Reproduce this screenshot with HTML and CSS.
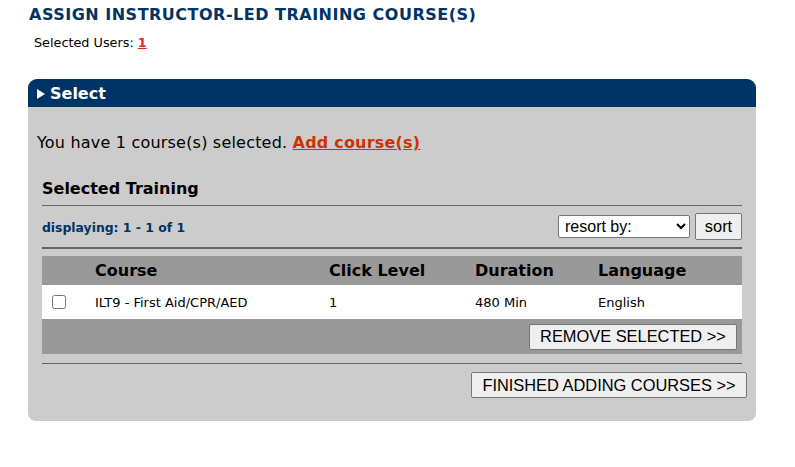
FILE: index.html
```html
<!DOCTYPE html>
<html>
<head>
<meta charset="utf-8">
<link rel="stylesheet" href="styles.css">
</head>
<body>
<h1 class="title">ASSIGN INSTRUCTOR-LED TRAINING COURSE(S)</h1>
<div class="users">Selected Users: <a href="#" class="users-link">1</a></div>
<div class="panel">
  <div class="panel-head"><span class="tri"></span><span class="panel-title">Select</span></div>
  <div class="panel-body">
    <p class="count">You have 1 course(s) selected. <a href="#" class="add-link">Add course(s)</a></p>
    <div class="section">
      <h2 class="section-title">Selected Training</h2>
      <div class="toolbar">
        <span class="displaying">displaying: 1 - 1 of 1</span>
        <div class="sorter">
          <select class="sort-select"><option>resort by:</option></select>
          <button class="btn sort-btn">sort</button>
        </div>
      </div>
      <div class="grid">
        <div class="grid-row grid-head">
          <div></div>
          <div>Course</div>
          <div>Click Level</div>
          <div>Duration</div>
          <div>Language</div>
        </div>
        <div class="grid-row grid-item">
          <div class="cb-cell"><input type="checkbox" class="cb"></div>
          <div>ILT9 - First Aid/CPR/AED</div>
          <div>1</div>
          <div>480 Min</div>
          <div>English</div>
        </div>
        <div class="grid-foot">
          <button class="btn remove-btn">REMOVE SELECTED &gt;&gt;</button>
        </div>
      </div>
    </div>
    <div class="finish-row">
      <button class="btn finish-btn">FINISHED ADDING COURSES &gt;&gt;</button>
    </div>
  </div>
</div>
</body>
</html>
```

FILE: styles.css
```css
html, body {
  margin: 0;
  padding: 0;
  background: #ffffff;
}
body {
  font-family: "DejaVu Sans", Verdana, sans-serif;
  color: #000;
}
.title {
  margin: 0;
  padding: 5px 0 0 29px;
  font-size: 16px;
  line-height: 20px;
  font-weight: bold;
  color: #003366;
  letter-spacing: 0.5px;
}
.users {
  padding: 10px 0 0 34px;
  font-size: 12.8px;
  line-height: 16px;
}
.users-link {
  color: #ee2222;
  font-weight: bold;
}
.panel {
  margin: 28px 0 0 28px;
  width: 728px;
  background: #cccccc;
  border-radius: 9px 9px 8px 8px;
  overflow: hidden;
}
.panel-head {
  height: 28px;
  background: #003366;
  display: flex;
  align-items: center;
  padding-left: 9px;
  color: #fff;
}
.tri {
  width: 0;
  height: 0;
  border-top: 5px solid transparent;
  border-bottom: 5px solid transparent;
  border-left: 8px solid #fff;
  margin-right: 5px;
  margin-top: 1px;
}
.panel-title {
  font-size: 16px;
  font-weight: bold;
}
.panel-body {
  padding: 0 0 23px 0;
}
.count {
  margin: 0;
  padding: 24px 0 0 9px;
  font-size: 16px;
  line-height: 24px;
  letter-spacing: 0.2px;
}
.add-link {
  color: #cc3300;
  font-weight: bold;
}
.section {
  margin: 24px 14px 0 14px;
}
.section-title {
  margin: 0;
  font-size: 16px;
  line-height: 20px;
  font-weight: bold;
  padding-bottom: 6px;
  border-bottom: 1px solid #666666;
}
.toolbar {
  display: flex;
  align-items: center;
  justify-content: space-between;
  height: 41px;
  border-bottom: 2px solid #666666;
}
.displaying {
  font-size: 12.4px;
  font-weight: bold;
  color: #003366;
  padding-top: 2px;
}
.sorter {
  display: flex;
  align-items: center;
  gap: 5px;
}
.sort-select {
  width: 132px;
  height: 23px;
  font-family: "Liberation Sans", Arial, sans-serif;
  font-size: 16px;
  border: 1px solid #767676;
  background: #fff;
  border-radius: 2px;
  padding: 0 2px;
}
.btn {
  font-family: "Liberation Sans", Arial, sans-serif;
  font-size: 16.4px;
  background: #efefef;
  border: 1px solid #767676;
  border-radius: 2px;
  color: #000;
  padding: 0 8px;
}
.sort-btn {
  height: 27px;
  width: 47px;
  padding: 0;
}
.grid {
  margin-top: 7px;
}
.grid-row {
  display: grid;
  grid-template-columns: 53px 234px 146px 123px 1fr;
  align-items: center;
}
.grid-head {
  height: 29px;
  background: #999999;
  font-size: 16px;
  font-weight: bold;
}
.grid-item {
  height: 34px;
  background: #ffffff;
  font-size: 13px;
}
.cb-cell {
  display: flex;
  padding-left: 10px;
}
.cb {
  margin: 0;
  width: 14px;
  height: 14px;
}
.grid-foot {
  height: 35px;
  background: #999999;
  display: flex;
  align-items: center;
  justify-content: flex-end;
  padding-right: 5px;
}
.remove-btn {
  height: 26px;
  width: 208px;
}
.finish-row {
  margin: 9px 0 0 14px;
  border-top: 1px solid #666666;
  width: 700px;
  padding-top: 8px;
  display: flex;
  justify-content: flex-end;
}
.finish-btn {
  height: 26px;
  width: 276px;
  margin-right: -5px;
}
```
